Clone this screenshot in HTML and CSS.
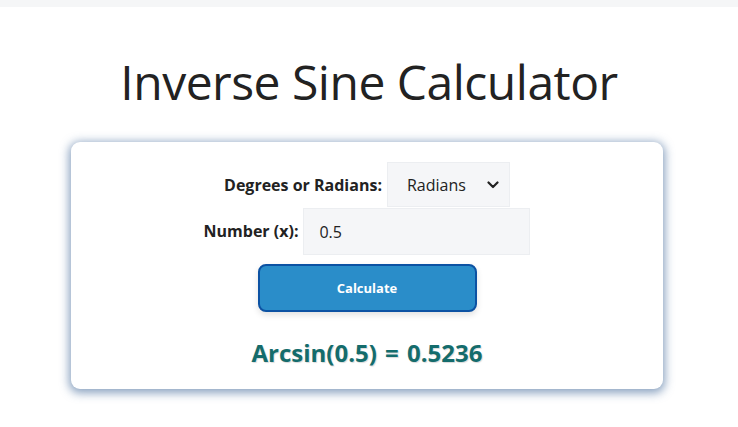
FILE: index.html
```html
<!DOCTYPE html>
<html lang="en">
<head>
    <meta charset="UTF-8">
    <meta name="viewport" content="width=device-width, initial-scale=1.0">
    <title>Inverse Sine Calculator</title>
    <link rel="stylesheet" href="styles.css">
</head>
<body>
    <div class="topbar"></div>
    <h1 class="title">Inverse Sine Calculator</h1>
    <div class="card">
        <div class="row">
            <label class="label" for="unit">Degrees or Radians:</label>
            <div class="select">
                <span>Radians</span>
                <svg class="chevron" width="12" height="8" viewBox="0 0 12 8"><path d="M1.5 1.5 L6 6 L10.5 1.5" fill="none" stroke="#222" stroke-width="2.2" stroke-linecap="round" stroke-linejoin="round"/></svg>
            </div>
        </div>
        <div class="row">
            <label class="label" for="num">Number (x):</label>
            <div class="input" id="num">0.5</div>
        </div>
        <button class="btn-calc">Calculate</button>
        <div class="result">Arcsin(0.5) = 0.5236</div>
    </div>
</body>
</html>
```

FILE: styles.css
```css
body {
    margin: 0;
    padding: 0 0 30px;
    font-family: 'Open Sans', 'Noto Sans', sans-serif;
    background-color: #fff;
    color: #222;
}
.topbar {
    height: 7px;
    background-color: #f5f6f7;
}
.title {
    margin: 42px 0 0;
    text-align: center;
    font-weight: 400;
    font-size: 48px;
    line-height: 66px;
    color: #222;
    letter-spacing: -0.5px;
}
.card {
    width: 592px;
    height: 247px;
    box-sizing: border-box;
    margin: 27px 0 0 71px;
    padding: 20px 0 0;
    background: #fff;
    border-radius: 9px;
    box-shadow: 0 2px 10px 2px rgba(60, 100, 150, 0.6);
    display: flex;
    flex-direction: column;
    align-items: center;
}
.row {
    display: flex;
    align-items: center;
    gap: 5px;
}
.label {
    font-weight: 700;
    font-size: 16px;
}
.select {
    width: 123px;
    height: 45px;
    box-sizing: border-box;
    border: 1px solid #eceef1;
    background: #f5f6f8;
    display: flex;
    align-items: center;
    justify-content: space-between;
    padding: 0 10px 0 19px;
    font-size: 16px;
}
.input {
    width: 227px;
    height: 47px;
    box-sizing: border-box;
    border: 1px solid #eceef1;
    background: #f5f6f8;
    display: flex;
    align-items: center;
    padding: 0 15px;
    font-size: 16px;
    margin-top: 1px;
}
.btn-calc {
    margin-top: 9px;
    width: 219px;
    height: 48px;
    background-color: #2a8dc9;
    border: 2px solid #0c52a3;
    border-radius: 8px;
    color: #fff;
    font-family: 'Open Sans', sans-serif;
    font-weight: 700;
    font-size: 13px;
    box-shadow: 0 3px 6px rgba(0, 0, 0, 0.12);
}
.result {
    margin-top: 24px;
    font-weight: 700;
    font-size: 24px;
    color: #146c6c;
    word-spacing: 2px;
    text-shadow: 1px 1px 1px rgba(0, 0, 0, 0.15);
}
```
